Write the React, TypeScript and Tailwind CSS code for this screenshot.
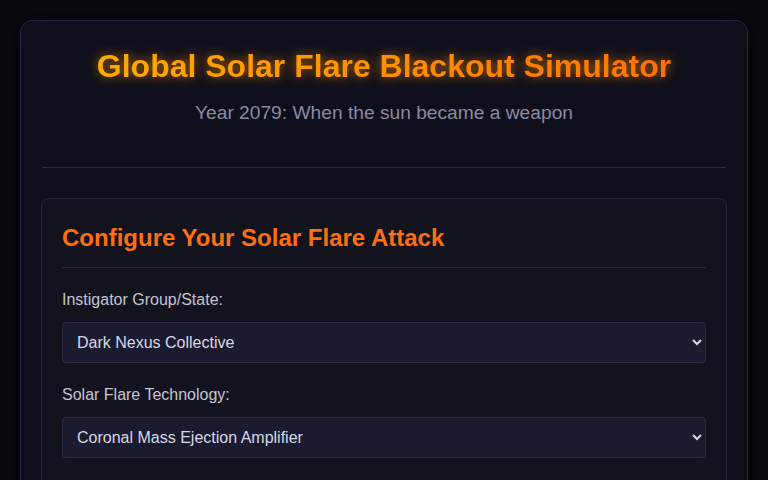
import { useState } from 'react';

const groups = ['Dark Nexus Collective', 'Helios Syndicate', 'Eclipse Directorate'];
const techs = ['Coronal Mass Ejection Amplifier', 'Magnetospheric Disruptor', 'Plasma Lance Array'];

function Field({ label, value, options, onChange }: { label: string; value: string; options: string[]; onChange: (v: string) => void }) {
  return (
    <div className="mb-[22px]">
      <label className="mb-[12px] block text-[16px] leading-[20px] text-[#c4c4d4]">{label}</label>
      <select
        value={value}
        onChange={(e) => onChange(e.target.value)}
        className="h-[41px] w-full rounded-[4px] border border-[#2c2c48] bg-[#1a1b2e] pl-[10px] pr-[10px] text-[16px] text-[#d8d8e6] outline-none"
      >
        {options.map((o) => (
          <option key={o}>{o}</option>
        ))}
      </select>
    </div>
  );
}

export default function App() {
  const [group, setGroup] = useState(groups[0]);
  const [tech, setTech] = useState(techs[0]);

  return (
    <div className="min-h-screen bg-[#0a0a10] px-5 pt-5 pb-10 font-['Liberation_Sans',Arial,sans-serif]">
      <div className="rounded-[12px] border border-[#28283e] bg-[#0f0f1b] px-5 pt-[26px] pb-10 shadow-[0_0_30px_rgba(0,0,0,0.8)]">
        <header className="mx-px border-b border-[#2a2a40] pb-[43px] text-center">
          <h1 className="bg-gradient-to-r from-[#ffb000] to-[#ff6a00] bg-clip-text text-[32px] leading-[38px] font-bold text-transparent drop-shadow-[0_0_6px_rgba(255,140,0,0.7)]">
            Global Solar Flare Blackout Simulator
          </h1>
          <p className="mt-[16px] text-[19.2px] leading-[23px] text-[#8a8aa2]">Year 2079: When the sun became a weapon</p>
        </header>

        <section className="mt-[30px] rounded-[8px] border border-[#28283e] bg-[#13131e] px-5 pt-[24px] pb-2">
          <h2 className="border-b border-[#2a2a40] pb-[15px] text-[24px] leading-[29px] font-bold text-[#ff6e0f]">
            Configure Your Solar Flare Attack
          </h2>
          <div className="pt-[22px]">
            <Field label="Instigator Group/State:" value={group} options={groups} onChange={setGroup} />
            <Field label="Solar Flare Technology:" value={tech} options={techs} onChange={setTech} />
          </div>
        </section>
      </div>
    </div>
  );
}
